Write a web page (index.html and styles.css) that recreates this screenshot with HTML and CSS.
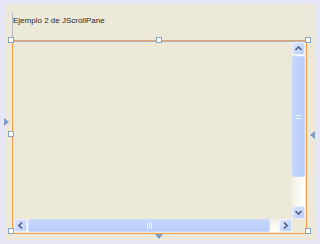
FILE: index.html
```html
<!DOCTYPE html>
<html lang="es">
<head>
    <meta charset="UTF-8">
    <title>Ejemplo 2 de JScrollPane</title>
    <link rel="stylesheet" href="styles.css">
</head>
<body>
    <div class="designer">
        <div class="form">
            <div class="label-row">
                <span class="label">Ejemplo 2 de JScrollPane</span>
            </div>
            <div class="scroll-pane">
                <div class="viewport"></div>
                <div class="vbar">
                    <div class="btn"><svg width="7" height="5" viewBox="0 0 7 5"><path d="M0.5 4 L3.5 1 L6.5 4" fill="none" stroke="#4d6185" stroke-width="1.6"/></svg></div>
                    <div class="vthumb"><span class="grip-h"></span></div>
                    <div class="vtrack"></div>
                    <div class="btn"><svg width="7" height="5" viewBox="0 0 7 5"><path d="M0.5 1 L3.5 4 L6.5 1" fill="none" stroke="#4d6185" stroke-width="1.6"/></svg></div>
                </div>
                <div class="hbar">
                    <div class="btn"><svg width="5" height="7" viewBox="0 0 5 7"><path d="M4 0.5 L1 3.5 L4 6.5" fill="none" stroke="#4d6185" stroke-width="1.6"/></svg></div>
                    <div class="hthumb"><span class="grip-v"></span></div>
                    <div class="htrack"></div>
                    <div class="btn"><svg width="5" height="7" viewBox="0 0 5 7"><path d="M1 0.5 L4 3.5 L1 6.5" fill="none" stroke="#4d6185" stroke-width="1.6"/></svg></div>
                </div>
                <div class="corner"></div>
            </div>
        </div>

        <!-- selection handles -->
        <span class="handle" style="left:8px;top:37px"></span>
        <span class="handle" style="left:156px;top:37px"></span>
        <span class="handle" style="left:305px;top:37px"></span>
        <span class="handle" style="left:8px;top:131px"></span>
        <span class="handle" style="left:8px;top:228px"></span>
        <span class="handle" style="left:305px;top:228px"></span>

        <!-- resize arrows -->
        <span class="arrow arrow-left"></span>
        <span class="arrow arrow-right"></span>
        <span class="arrow arrow-down"></span>
    </div>
</body>
</html>
```

FILE: styles.css
```css
html, body {
    margin: 0;
    padding: 0;
}

body {
    width: 320px;
    height: 244px;
    background-color: #e6e6f6;
    font-family: 'Liberation Sans', Arial, sans-serif;
    overflow: hidden;
}

.designer {
    position: relative;
    width: 320px;
    height: 244px;
    box-sizing: border-box;
    padding: 4px 5px 4px 5px;
}

.form {
    height: 100%;
    background-color: #ece9d8;
    display: flex;
    flex-direction: column;
    padding: 0 8px 6px 7px;
    box-sizing: border-box;
}

.label-row {
    height: 27px;
    flex: none;
    display: flex;
    align-items: flex-start;
    border-left: 1px solid #b8b8c0;
    margin-top: 9px;
    box-sizing: border-box;
    padding-top: 3px;
}

.label {
    font-size: 8px;
    color: #2a2a2a;
    margin-left: 0;
}

.scroll-pane {
    flex: 1;
    display: grid;
    grid-template-columns: 1fr 13px;
    grid-template-rows: 1fr 13px;
    border: 1px solid #f5a04c;
    border-top: 1px solid #e8a060;
    box-shadow: inset 0 1px 0 #a8b8c8;
    padding: 1px 1px 1px 1px;
    box-sizing: border-box;
}

.viewport {
    background-color: #ece9d8;
}

.vbar {
    display: flex;
    flex-direction: column;
    background: linear-gradient(to right, #f3f1e6, #fefefb);
}

.hbar {
    display: flex;
    background: linear-gradient(to bottom, #f3f1e6, #fefefb);
}

.corner {
    background-color: #ece9d8;
}

.btn {
    width: 13px;
    height: 13px;
    flex: none;
    box-sizing: border-box;
    border: 1px solid #e9efff;
    border-radius: 2px;
    background: linear-gradient(135deg, #dde7fe, #b8cdf9);
    display: flex;
    align-items: center;
    justify-content: center;
}

.vthumb {
    height: 119px;
    margin: 1px 0;
    flex: none;
    border: 1px solid #c9d8fc;
    border-radius: 2px;
    background: linear-gradient(to right, #c6d7fd, #b9cdfb);
    display: flex;
    align-items: center;
    justify-content: center;
}

.hthumb {
    width: 240px;
    margin: 0 1px;
    flex: none;
    border: 1px solid #c9d8fc;
    border-radius: 2px;
    background: linear-gradient(to bottom, #c6d7fd, #b9cdfb);
    display: flex;
    align-items: center;
    justify-content: center;
}

.vtrack,
.htrack {
    flex: 1;
}

.grip-h {
    width: 6px;
    height: 4px;
    border-top: 1px solid #eef3ff;
    border-bottom: 1px solid #eef3ff;
    box-sizing: border-box;
}

.grip-v {
    width: 5px;
    height: 6px;
    border-left: 1px solid #eef3ff;
    border-right: 1px solid #eef3ff;
    box-sizing: border-box;
    position: relative;
}

.grip-v::after {
    content: "";
    position: absolute;
    left: 1px;
    top: 0;
    width: 1px;
    height: 6px;
    background: #eef3ff;
}

.handle {
    position: absolute;
    width: 4px;
    height: 4px;
    border: 1px solid #8aa4c0;
    background: #ffffff;
}

.arrow {
    position: absolute;
    width: 0;
    height: 0;
}

.arrow-left {
    left: 4px;
    top: 118px;
    border-top: 4px solid transparent;
    border-bottom: 4px solid transparent;
    border-left: 5px solid #7d9cc4;
}

.arrow-right {
    left: 310px;
    top: 131px;
    border-top: 4px solid transparent;
    border-bottom: 4px solid transparent;
    border-right: 5px solid #7d9cc4;
}

.arrow-down {
    left: 155px;
    top: 234px;
    border-left: 4px solid transparent;
    border-right: 4px solid transparent;
    border-top: 5px solid #7d9cc4;
}
```
